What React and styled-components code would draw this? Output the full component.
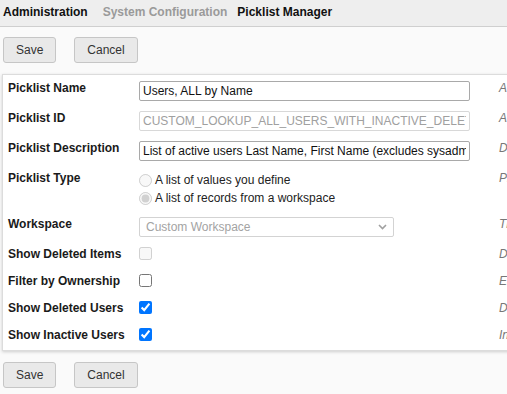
import React from "react";
import styled, { createGlobalStyle } from "styled-components";

const GlobalStyle = createGlobalStyle`
	body {
		margin: 0;
		background-color: #fafafa;
		font-family: "Liberation Sans", Arial, sans-serif;
		font-size: 12px;
		color: #222;
		overflow: hidden;
	}
`;

const Header = styled.nav`
	display: flex;
	align-items: flex-start;
	height: 27px;
	padding: 5px 0 0 3px;
	box-sizing: border-box;
	background-color: #eeeeee;
	border-bottom: 1px solid #cfcfcf;
`;

const Crumb = styled.span`
	margin-left: ${(p) => p.$gap || 0}px;
	font-weight: bold;
	line-height: 14px;
	color: ${(p) => (p.$muted ? "#9a9a9a" : "#111")};
`;

const Toolbar = styled.div`
	display: flex;
	gap: 18px;
	padding: ${(p) => (p.$bottom ? "11px 3px" : "10px 3px 11px")};
`;

const Button = styled.button`
	height: 26px;
	padding: 0 12px;
	font-family: inherit;
	font-size: 12px;
	color: #333;
	background-color: #e9e9e9;
	border: 1px solid #c6c6c6;
	border-radius: 3px;
`;

const Panel = styled.section`
	width: 800px;
	margin-left: 2px;
	padding: 1px 0 0 5px;
	background-color: #fff;
	border: 1px solid #dcdcdc;
	box-shadow: 0 1px 3px rgba(0, 0, 0, 0.18);
`;

const Row = styled.div`
	display: grid;
	grid-template-columns: 131px 360px auto;
	align-items: start;
	padding: 5px 0;
`;

const Label = styled.label`
	font-weight: bold;
	line-height: 14px;
	color: #1a1a1a;
`;

const Hint = styled.span`
	font-style: italic;
	line-height: 14px;
	color: #777;
	white-space: nowrap;
`;

const TextInput = styled.input`
	width: 331px;
	height: 20px;
	box-sizing: border-box;
	padding: 0 3px;
	font-family: inherit;
	font-size: 12px;
	color: #111;
	border: 1px solid #a9a9a9;
	border-radius: 2px;

	&:disabled {
		background-color: #fff;
		border-color: #d8d8d8;
		color: #a0a0a0;
	}
`;

const RadioGroup = styled.div`
	display: flex;
	flex-direction: column;
`;

const RadioLine = styled.label`
	display: flex;
	align-items: center;
	gap: 3px;
	height: 18px;
	color: #222;

	input {
		margin: 0;
		width: 13px;
		height: 13px;
	}
`;

const SelectBox = styled.div`
	display: flex;
	align-items: center;
	justify-content: space-between;
	width: 255px;
	height: 20px;
	box-sizing: border-box;
	padding: 0 6px;
	border: 1px solid #d3d3d3;
	border-radius: 2px;
	color: #a3a3a3;

	svg {
		display: block;
	}
`;

const Check = styled.input`
	margin: 0 0 4px;
	width: 13px;
	height: 13px;
`;

const Chevron = () => (
	<svg width="9" height="6" viewBox="0 0 9 6">
		<path d="M1 1l3.5 3.5L8 1" fill="none" stroke="#a0a0a0" strokeWidth="1.6" />
	</svg>
);

const checks = [
	{ label: "Show Deleted Items", hint: "Display items that have been deleted", disabled: true },
	{ label: "Filter by Ownership", hint: "Enable filtering of values by ownership" },
	{ label: "Show Deleted Users", hint: "Display users that have been deleted", checked: true },
	{ label: "Show Inactive Users", hint: "Include users that are marked inactive", checked: true },
];

const Actions = ({ bottom }) => (
	<Toolbar $bottom={bottom}>
		<Button>Save</Button>
		<Button>Cancel</Button>
	</Toolbar>
);

export default function App() {
	return (
		<>
			<GlobalStyle />
			<Header>
				<Crumb>Administration</Crumb>
				<Crumb $muted $gap={15}>System Configuration</Crumb>
				<Crumb $gap={10}>Picklist Manager</Crumb>
			</Header>

			<Actions />

			<Panel>
				<Row>
					<Label>Picklist Name</Label>
					<TextInput defaultValue="Users, ALL by Name" />
					<Hint>A name that identifies this picklist</Hint>
				</Row>
				<Row>
					<Label>Picklist ID</Label>
					<TextInput disabled defaultValue="CUSTOM_LOOKUP_ALL_USERS_WITH_INACTIVE_DELETED" />
					<Hint>A unique identifier for the picklist</Hint>
				</Row>
				<Row>
					<Label>Picklist Description</Label>
					<TextInput defaultValue="List of active users Last Name, First Name (excludes sysadmin)" />
					<Hint>Description of the picklist contents</Hint>
				</Row>
				<Row>
					<Label>Picklist Type</Label>
					<RadioGroup>
						<RadioLine>
							<input type="radio" name="type" disabled />
							A list of values you define
						</RadioLine>
						<RadioLine>
							<input type="radio" name="type" disabled defaultChecked />
							A list of records from a workspace
						</RadioLine>
					</RadioGroup>
					<Hint>Picklist values come from a list or a workspace</Hint>
				</Row>
				<Row>
					<Label>Workspace</Label>
					<SelectBox>
						Custom Workspace
						<Chevron />
					</SelectBox>
					<Hint>The workspace that supplies the records</Hint>
				</Row>
				{checks.map((c) => (
					<Row key={c.label}>
						<Label>{c.label}</Label>
						<Check type="checkbox" disabled={c.disabled} defaultChecked={c.checked} />
						<Hint>{c.hint}</Hint>
					</Row>
				))}
			</Panel>

			<Actions bottom />
		</>
	);
}
